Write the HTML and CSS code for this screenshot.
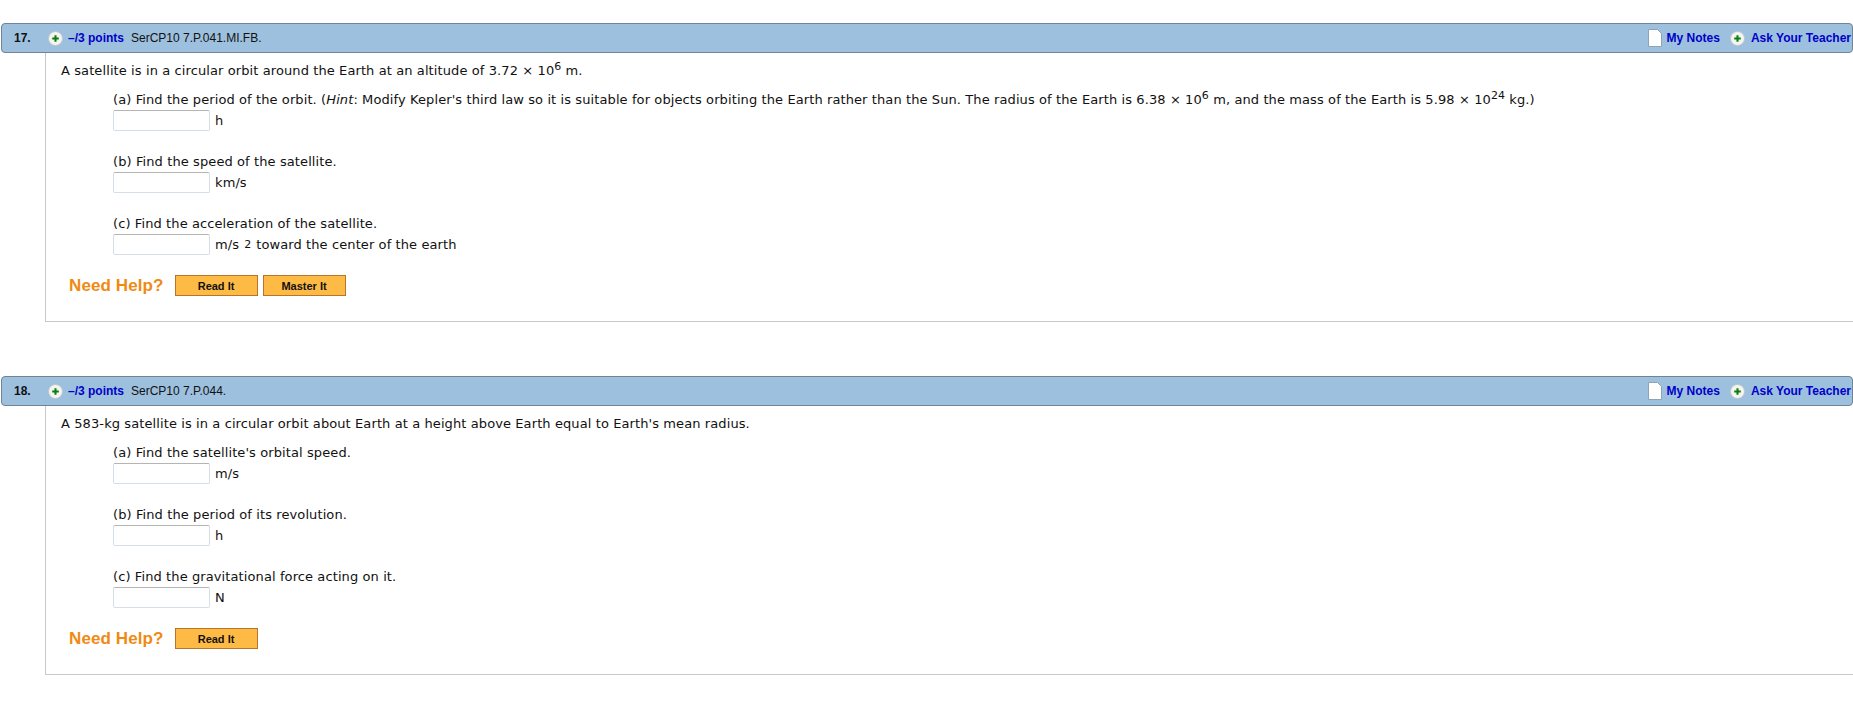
FILE: index.html
```html
<!DOCTYPE html>
<html lang="en">
<head>
    <meta charset="UTF-8">
    <title>Assignment</title>
    <link rel="stylesheet" href="styles.css">
</head>
<body>
    <div class="question first">
        <div class="bar">
            <span class="num">17.</span>
            <svg class="plus" viewBox="0 0 16 16"><circle cx="8" cy="8" r="7.5" fill="#f4f4f0" stroke="#b9c4cc"/><path d="M8 4.5v7M4.5 8h7" stroke="#0a7d0a" stroke-width="2.2"/></svg>
            <span class="points">&ndash;/3 points</span>
            <span class="code">SerCP10 7.P.041.MI.FB.</span>
            <span class="tools">
                <svg class="note" viewBox="0 0 14 18"><path d="M.5.5h9l4 4v13H.5z" fill="#fff" stroke="#8fa3b5"/></svg>
                <span class="tool-link">My Notes</span>
                <svg class="plus" viewBox="0 0 16 16"><circle cx="8" cy="8" r="7.5" fill="#f4f4f0" stroke="#b9c4cc"/><path d="M8 4.5v7M4.5 8h7" stroke="#0a7d0a" stroke-width="2.2"/></svg>
                <span class="tool-link">Ask Your Teacher</span>
            </span>
        </div>
        <div class="body">
            <p class="intro">A satellite is in a circular orbit around the Earth at an altitude of <span class="red">3.72</span> &times; 10<sup>6</sup> m.</p>
            <div class="part">
                <div>(a) Find the period of the orbit. (<i>Hint</i>: Modify Kepler's third law so it is suitable for objects orbiting the Earth rather than the Sun. The radius of the Earth is 6.38 &times; 10<sup>6</sup> m, and the mass of the Earth is 5.98 &times; 10<sup>24</sup> kg.)</div>
                <div class="answer"><input type="text"> h</div>
            </div>
            <div class="part">
                <div>(b) Find the speed of the satellite.</div>
                <div class="answer"><input type="text"> km/s</div>
            </div>
            <div class="part">
                <div>(c) Find the acceleration of the satellite.</div>
                <div class="answer"><input type="text"> m/s<sup>2</sup> toward the center of the earth</div>
            </div>
            <div class="help">
                <span class="need">Need Help?</span>
                <button class="btn">Read It</button>
                <button class="btn">Master It</button>
            </div>
        </div>
    </div>

    <div class="question">
        <div class="bar">
            <span class="num">18.</span>
            <svg class="plus" viewBox="0 0 16 16"><circle cx="8" cy="8" r="7.5" fill="#f4f4f0" stroke="#b9c4cc"/><path d="M8 4.5v7M4.5 8h7" stroke="#0a7d0a" stroke-width="2.2"/></svg>
            <span class="points">&ndash;/3 points</span>
            <span class="code">SerCP10 7.P.044.</span>
            <span class="tools">
                <svg class="note" viewBox="0 0 14 18"><path d="M.5.5h9l4 4v13H.5z" fill="#fff" stroke="#8fa3b5"/></svg>
                <span class="tool-link">My Notes</span>
                <svg class="plus" viewBox="0 0 16 16"><circle cx="8" cy="8" r="7.5" fill="#f4f4f0" stroke="#b9c4cc"/><path d="M8 4.5v7M4.5 8h7" stroke="#0a7d0a" stroke-width="2.2"/></svg>
                <span class="tool-link">Ask Your Teacher</span>
            </span>
        </div>
        <div class="body">
            <p class="intro">A <span class="red">583</span>-kg satellite is in a circular orbit about Earth at a height above Earth equal to Earth's mean radius.</p>
            <div class="part">
                <div>(a) Find the satellite's orbital speed.</div>
                <div class="answer"><input type="text"> m/s</div>
            </div>
            <div class="part">
                <div>(b) Find the period of its revolution.</div>
                <div class="answer"><input type="text"> h</div>
            </div>
            <div class="part">
                <div>(c) Find the gravitational force acting on it.</div>
                <div class="answer"><input type="text"> N</div>
            </div>
            <div class="help">
                <span class="need">Need Help?</span>
                <button class="btn">Read It</button>
            </div>
        </div>
    </div>
</body>
</html>
```

FILE: styles.css
```css
body {
    margin: 0;
    padding: 23px 0 0 1px;
    background-color: white;
    color: #111;
    font-family: "DejaVu Sans", Verdana, sans-serif;
    font-size: 13px;
    overflow: hidden;
}
.question {
    margin-bottom: 54px;
}
.bar {
    display: flex;
    align-items: center;
    height: 28px;
    padding: 0 1px 0 12px;
    background-color: #9dc0de;
    border: 1px solid #6f8494;
    border-radius: 4px;
    font-family: "Liberation Sans", Arial, sans-serif;
    font-size: 12px;
}
.num {
    width: 34px;
    font-weight: bold;
    color: #111;
}
.plus {
    width: 15px;
    height: 15px;
    flex: none;
}
.points {
    margin-left: 5px;
    font-weight: bold;
    color: #0000c8;
}
.code {
    margin-left: 7px;
    color: #111;
}
.tools {
    margin-left: auto;
    display: flex;
    align-items: center;
}
.note {
    width: 14px;
    height: 18px;
    margin-right: 5px;
}
.tool-link {
    font-weight: bold;
    color: #0000c8;
}
.tools .plus {
    margin: 0 6px 0 10px;
}
.body {
    margin-left: 44px;
    padding: 9px 0 25px 15px;
    border-left: 1px solid #c8c8c8;
    border-bottom: 1px solid #c8c8c8;
    letter-spacing: 0.1px;
}
.intro {
    margin: 0 0 12px;
    line-height: 18px;
}
.part {
    margin: 0 0 0 52px;
    height: 62px;
    line-height: 16px;
}
.answer {
    display: flex;
    align-items: center;
    gap: 5px;
    margin-top: 2px;
}
sup {
    font-size: 11px;
    line-height: 0;
}
input {
    width: 95px;
    height: 19px;
    padding: 0;
    border: 1px solid #d5dde6;
    border-top-color: #b5b5b5;
    border-radius: 2px;
    background-color: white;
}
.help {
    display: flex;
    align-items: center;
    gap: 5px;
    margin-left: 8px;
    margin-top: -3px;
}
.need {
    margin-right: 6px;
    font-family: "Liberation Sans", Arial, sans-serif;
    font-size: 17px;
    font-weight: bold;
    color: #f08a12;
}
.btn {
    width: 83px;
    height: 21px;
    padding: 0;
    border: 1px solid #b8752a;
    outline: 3px solid #fdbb45;
    outline-offset: -4px;
    background-color: #fdbb45;
    box-shadow: inset 0 0 0 1px #fbd9a0;
    font-family: "Liberation Sans", Arial, sans-serif;
    font-size: 11px;
    font-weight: bold;
    color: #111;
}
```
